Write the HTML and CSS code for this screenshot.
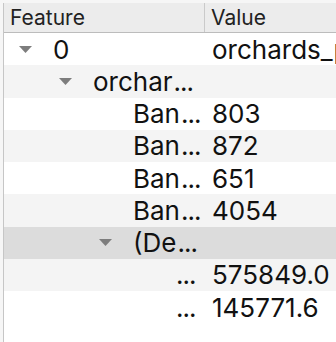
FILE: index.html
```html
<!DOCTYPE html>
<html lang="en">
<head>
    <meta charset="UTF-8">
    <meta name="viewport" content="width=device-width, initial-scale=1.0">
    <title>Identify Results</title>
    <link rel="stylesheet" href="styles.css">
</head>
<body>
    <div class="tree">
        <!-- Header -->
        <div class="tree-header">
            <div class="head-cell head-feature">Feature</div>
            <div class="head-cell head-value">Value</div>
        </div>

        <!-- Rows (labels are elided like the Qt view) -->
        <div class="row">
            <div class="cell feature lvl-0"><span class="toggle"><svg width="13" height="7" viewBox="0 0 13 7"><path d="M0 0 H13 L6.5 7 Z"/></svg></span><span class="label">0</span></div>
            <div class="cell value">orchards_polygons</div>
        </div>
        <div class="row alt">
            <div class="cell feature lvl-1"><span class="toggle"><svg width="13" height="7" viewBox="0 0 13 7"><path d="M0 0 H13 L6.5 7 Z"/></svg></span><span class="label">orchar<span class="dots">...</span></span></div>
            <div class="cell value"></div>
        </div>
        <div class="row">
            <div class="cell feature lvl-2"><span class="label">Ban<span class="dots">...</span></span></div>
            <div class="cell value">803</div>
        </div>
        <div class="row alt">
            <div class="cell feature lvl-2"><span class="label">Ban<span class="dots">...</span></span></div>
            <div class="cell value">872</div>
        </div>
        <div class="row">
            <div class="cell feature lvl-2"><span class="label">Ban<span class="dots">...</span></span></div>
            <div class="cell value">651</div>
        </div>
        <div class="row alt">
            <div class="cell feature lvl-2"><span class="label">Ban<span class="dots">...</span></span></div>
            <div class="cell value">4054</div>
        </div>
        <div class="row selected">
            <div class="cell feature lvl-1b"><span class="toggle"><svg width="13" height="7" viewBox="0 0 13 7"><path d="M0 0 H13 L6.5 7 Z"/></svg></span><span class="label">(De<span class="dots">...</span></span></div>
            <div class="cell value"></div>
        </div>
        <div class="row alt">
            <div class="cell feature lvl-3"><span class="label"><span class="dots">...</span></span></div>
            <div class="cell value">575849.0</div>
        </div>
        <div class="row">
            <div class="cell feature lvl-3"><span class="label"><span class="dots">...</span></span></div>
            <div class="cell value">145771.6</div>
        </div>
    </div>
</body>
</html>
```

FILE: styles.css
```css
body {
    margin: 0;
    padding: 0;
    background-color: #f6f6f6;
    font-family: Inter, "Liberation Sans", Arial, sans-serif;
    color: #111;
    overflow: hidden;
    height: 342px;
}
.tree {
    margin: 3px 0 0 3px;
    width: 333px;
    height: 339px;
    overflow: hidden;
    background: #fff;
    border-left: 1px solid #c6c6c6;
}
.tree-header {
    display: grid;
    grid-template-columns: 201px 1fr;
    height: 29px;
    background: #ececec;
    border-bottom: 1px solid #bcbcbc;
    font-size: 21px;
    color: #222;
}
.head-cell {
    display: flex;
    align-items: center;
    padding-left: 6px;
}
.head-feature {
    border-right: 1px solid #cacaca;
}
.row {
    display: grid;
    grid-template-columns: 201px 1fr;
    height: 32.25px;
    font-size: 26px;
}
.row:first-of-type {
    margin-top: 1px;
}
.row.alt {
    background: #f4f4f4;
}
.row.selected {
    background: #dcdcdc;
}
.cell {
    display: flex;
    align-items: center;
    min-width: 0;
    white-space: nowrap;
    overflow: hidden;
}
.value {
    padding-left: 7px;
}
.lvl-0 { padding-left: 15px; }
.lvl-1 { padding-left: 55px; }
.lvl-1b { padding-left: 95px; }
.lvl-2 { padding-left: 129px; }
.lvl-3 { padding-left: 171px; }
.toggle {
    flex: none;
    width: 34px;
    display: flex;
    align-items: center;
}
.toggle svg {
    fill: #7d7d7d;
}
.dots {
    letter-spacing: -1px;
    margin-left: 1px;
}
```
